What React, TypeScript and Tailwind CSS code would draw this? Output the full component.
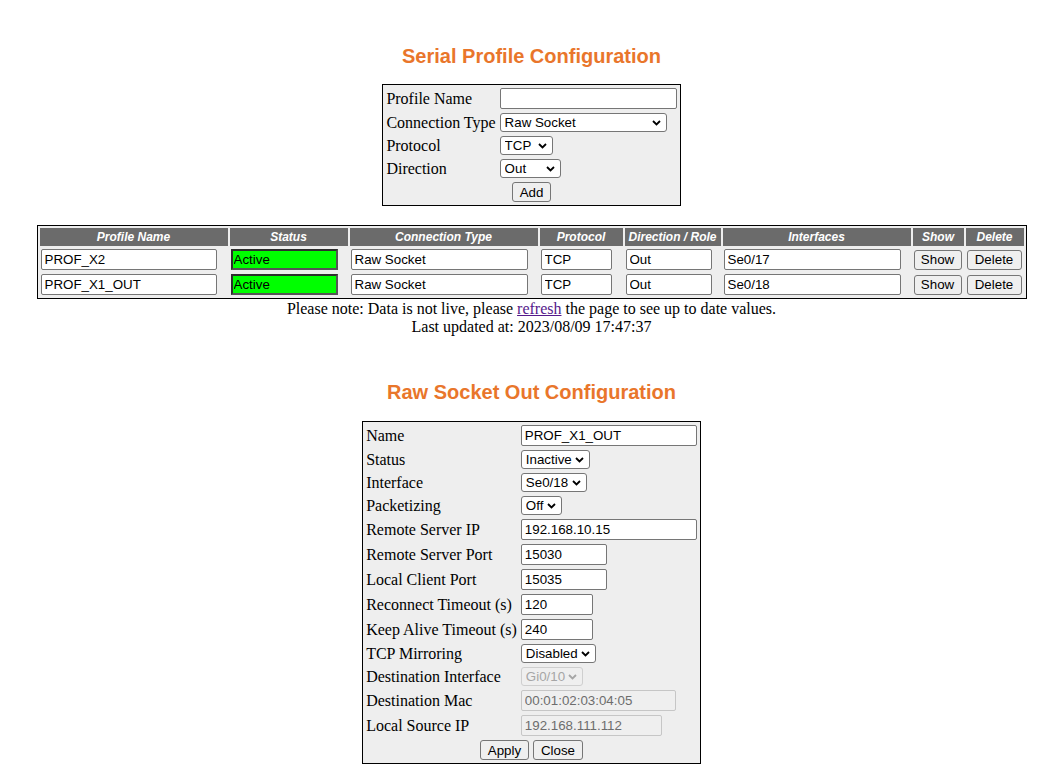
import React from 'react';

const serif = "font-['Liberation_Serif','Times_New_Roman',serif]";
const sans = "font-['Liberation_Sans',Arial,sans-serif]";

function TextBox({ value = '', w, disabled = false }: { value?: string; w: string; disabled?: boolean }) {
  return (
    <input
      type="text"
      defaultValue={value}
      disabled={disabled}
      className={`${sans} ${w} block h-[21px] text-[13.33px] leading-[normal] px-[3px] rounded-[2px] border ${
        disabled
          ? 'border-[#c6c6c6] bg-[#efefef] text-[#6d6d6d]'
          : 'border-[#767676] bg-white text-black'
      }`}
    />
  );
}

function Select({ value, w, disabled = false }: { value: string; w: string; disabled?: boolean }) {
  return (
    <div className={`relative ${w} h-[19px]`}>
      <select
        disabled={disabled}
        defaultValue={value}
        className={`${sans} appearance-none block w-full h-full text-[13.33px] leading-[normal] pl-[4px] pr-[16px] rounded-[3px] border ${
          disabled
            ? 'border-[#cfcfcf] bg-[#efefef] text-[#a6a6a6]'
            : 'border-[#767676] bg-white text-black'
        }`}
      >
        <option>{value}</option>
      </select>
      <svg
        className={`pointer-events-none absolute right-[6px] top-[7px] ${disabled ? 'text-[#a6a6a6]' : 'text-black'}`}
        width="9"
        height="6"
        viewBox="0 0 9 6"
      >
        <path d="M1 1l3.5 3.5L8 1" fill="none" stroke="currentColor" strokeWidth="1.8" />
      </svg>
    </div>
  );
}

function Btn({ children, w }: { children: React.ReactNode; w: string }) {
  return (
    <button
      className={`${sans} ${w} h-[20px] text-[13.33px] leading-[normal] text-black bg-[#efefef] border border-[#767676] rounded-[3px]`}
    >
      {children}
    </button>
  );
}

function Title({ children }: { children: React.ReactNode }) {
  return (
    <h2 className={`${sans} text-center text-[20px] leading-[23px] font-bold text-[#e9762b]`}>{children}</h2>
  );
}

const profiles = [
  { name: 'PROF_X2', type: 'Raw Socket', proto: 'TCP', dir: 'Out', iface: 'Se0/17' },
  { name: 'PROF_X1_OUT', type: 'Raw Socket', proto: 'TCP', dir: 'Out', iface: 'Se0/18' },
];

const headers = [
  { label: 'Profile Name', w: 'w-[188px]' },
  { label: 'Status', w: 'w-[118px]' },
  { label: 'Connection Type', w: 'w-[188px]' },
  { label: 'Protocol', w: 'w-[83px]' },
  { label: 'Direction / Role', w: 'w-[96px]' },
  { label: 'Interfaces', w: 'w-[188px]' },
  { label: 'Show', w: 'w-[51px]' },
  { label: 'Delete', w: 'w-[58px]' },
];

type Row = { label: string; field: React.ReactNode };

const rawSocketRows: Row[] = [
  { label: 'Name', field: <TextBox value="PROF_X1_OUT" w="w-[176px]" /> },
  { label: 'Status', field: <Select value="Inactive" w="w-[69px]" /> },
  { label: 'Interface', field: <Select value="Se0/18" w="w-[66px]" /> },
  { label: 'Packetizing', field: <Select value="Off" w="w-[41px]" /> },
  { label: 'Remote Server IP', field: <TextBox value="192.168.10.15" w="w-[176px]" /> },
  { label: 'Remote Server Port', field: <TextBox value="15030" w="w-[86px]" /> },
  { label: 'Local Client Port', field: <TextBox value="15035" w="w-[86px]" /> },
  { label: 'Reconnect Timeout (s)', field: <TextBox value="120" w="w-[72px]" /> },
  { label: 'Keep Alive Timeout (s)', field: <TextBox value="240" w="w-[72px]" /> },
  { label: 'TCP Mirroring', field: <Select value="Disabled" w="w-[75px]" /> },
  { label: 'Destination Interface', field: <Select value="Gi0/10" w="w-[62px]" disabled /> },
  { label: 'Destination Mac', field: <TextBox value="00:01:02:03:04:05" w="w-[155px]" disabled /> },
  { label: 'Local Source IP', field: <TextBox value="192.168.111.112" w="w-[141px]" disabled /> },
];

export default function App() {
  return (
    <div className={`${serif} min-h-screen bg-white text-black text-[16px] leading-[normal] pl-[3px] pt-[45px]`}>
      <div className="flex flex-col items-center">
        <Title>Serial Profile Configuration</Title>

        <div className="mt-[16px] border border-black bg-[#eeeeee]">
          <table className="border-separate border-spacing-[2px]">
            <tbody>
              <tr>
                <td className="p-[1px]">Profile Name</td>
                <td className="p-[1px]">
                  <TextBox w="w-[177px]" />
                </td>
              </tr>
              <tr>
                <td className="p-[1px]">Connection Type</td>
                <td className="p-[1px]">
                  <Select value="Raw Socket" w="w-[167px]" />
                </td>
              </tr>
              <tr>
                <td className="p-[1px]">Protocol</td>
                <td className="p-[1px]">
                  <Select value="TCP" w="w-[53px]" />
                </td>
              </tr>
              <tr>
                <td className="p-[1px]">Direction</td>
                <td className="p-[1px]">
                  <Select value="Out" w="w-[61px]" />
                </td>
              </tr>
              <tr>
                <td colSpan={2} className="p-[1px]">
                  <div className="flex justify-center">
                    <Btn w="w-[39px]">Add</Btn>
                  </div>
                </td>
              </tr>
            </tbody>
          </table>
        </div>

        <div className="mt-[19px] border border-black bg-[#eeeeee]">
          <table className="border-separate border-spacing-[2px]">
            <thead>
              <tr>
                {headers.map((h) => (
                  <th
                    key={h.label}
                    className={`${sans} ${h.w} h-[18px] p-0 bg-[#6b6b6b] text-white text-[12px] leading-[14px] font-bold italic text-center`}
                  >
                    {h.label}
                  </th>
                ))}
              </tr>
            </thead>
            <tbody>
              {profiles.map((p) => (
                <tr key={p.name}>
                  <td className="p-[1px]">
                    <TextBox value={p.name} w="w-[176px]" />
                  </td>
                  <td className="p-[1px]">
                    <input
                      type="text"
                      defaultValue="Active"
                      className={`${sans} block w-[107px] h-[21px] text-[13.33px] px-[1px] bg-[#00ff00] text-black border-2 border-t-[#2e2e2e] border-l-[#2e2e2e] border-r-[#555] border-b-[#555]`}
                    />
                  </td>
                  <td className="p-[1px]">
                    <TextBox value={p.type} w="w-[177px]" />
                  </td>
                  <td className="p-[1px]">
                    <TextBox value={p.proto} w="w-[71px]" />
                  </td>
                  <td className="p-[1px]">
                    <TextBox value={p.dir} w="w-[86px]" />
                  </td>
                  <td className="p-[1px]">
                    <TextBox value={p.iface} w="w-[177px]" />
                  </td>
                  <td className="p-[1px]">
                    <Btn w="w-[48px]">Show</Btn>
                  </td>
                  <td className="p-[1px]">
                    <Btn w="w-[55px]">Delete</Btn>
                  </td>
                </tr>
              ))}
            </tbody>
          </table>
        </div>

        <p className="text-center pt-[1px]">
          Please note: Data is not live, please{' '}
          <a href="#" className="text-[#551a8b] underline">
            refresh
          </a>{' '}
          the page to see up to date values.
        </p>
        <p className="text-center">Last updated at: 2023/08/09 17:47:37</p>

        <div className="mt-[45px]">
          <Title>Raw Socket Out Configuration</Title>
        </div>

        <div className="mt-[17px] border border-black bg-[#eeeeee]">
          <table className="border-separate border-spacing-[2px]">
            <tbody>
              {rawSocketRows.map((r) => (
                <tr key={r.label}>
                  <td className="p-[1px] whitespace-nowrap">{r.label}</td>
                  <td className="p-[1px] w-[177px]">{r.field}</td>
                </tr>
              ))}
              <tr>
                <td colSpan={2} className="p-[1px]">
                  <div className="flex justify-center gap-[4px]">
                    <Btn w="w-[49px]">Apply</Btn>
                    <Btn w="w-[50px]">Close</Btn>
                  </div>
                </td>
              </tr>
            </tbody>
          </table>
        </div>
      </div>
    </div>
  );
}
